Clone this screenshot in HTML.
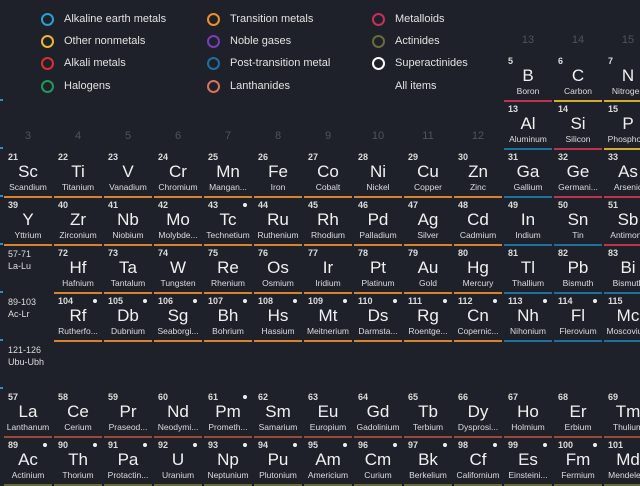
<!DOCTYPE html>
<html><head><meta charset="utf-8"><style>
html,body{margin:0;padding:0;background:#1e2129;width:640px;height:480px;overflow:hidden;font-family:"Liberation Sans",sans-serif;color:#e6e6e6}
.lg{position:absolute;font-size:11px;line-height:14px;color:#e2e2e2}
.o{position:absolute;width:9px;height:9px;border-radius:50%;border:2px solid}
.h{position:absolute;font-size:11px;color:#4e535c;width:48px;text-align:center}
.c{position:absolute;width:48px;height:46px}
.c i{position:absolute;left:4px;top:0;font-style:normal;font-size:9px;line-height:10px;font-weight:bold;color:#ddd}
.c b{position:absolute;left:0;top:10px;width:48px;text-align:center;font-weight:normal;font-size:17px;line-height:20px;color:#f0f0f0}
.c s{position:absolute;left:1px;top:30px;width:46px;text-align:center;text-decoration:none;font-size:8.5px;line-height:10px;white-space:nowrap;overflow:hidden;text-overflow:ellipsis;color:#ddd}
.c:after{content:"";position:absolute;left:0;bottom:0;width:48px;height:2px}
.d:before{content:"";position:absolute;right:5px;top:3px;width:4px;height:4px;border-radius:50%;background:#eee}
.t:after{background:#d9822b}.m:after{background:#c0324f}.n:after{background:#d9a92c}.p:after{background:#1f6f9e}.l:after{background:#9a4a38}.a:after{background:#6b6b3a}
.ph{position:absolute;left:8px;font-size:9px;line-height:12px;color:#ddd}
.tk{position:absolute;left:0;width:3px;height:2px;background:#2a8fc0}
</style></head><body>
<div class="o" style="left:41px;top:13px;border-color:#2a9fd0"></div><div class="lg" style="left:64px;top:12px">Alkaline earth metals</div>
<div class="o" style="left:41px;top:35px;border-color:#e8b830"></div><div class="lg" style="left:64px;top:34px">Other nonmetals</div>
<div class="o" style="left:41px;top:57px;border-color:#d83030"></div><div class="lg" style="left:64px;top:56px">Alkali metals</div>
<div class="o" style="left:41px;top:80px;border-color:#1f9a5a"></div><div class="lg" style="left:64px;top:79px">Halogens</div>
<div class="o" style="left:207px;top:13px;border-color:#ec902a"></div><div class="lg" style="left:230px;top:12px">Transition metals</div>
<div class="o" style="left:207px;top:35px;border-color:#7a3cb8"></div><div class="lg" style="left:230px;top:34px">Noble gases</div>
<div class="o" style="left:207px;top:57px;border-color:#1f6f9e"></div><div class="lg" style="left:230px;top:56px">Post-transition metal</div>
<div class="o" style="left:207px;top:80px;border-color:#d8735a"></div><div class="lg" style="left:230px;top:79px">Lanthanides</div>
<div class="o" style="left:372px;top:13px;border-color:#c8305a"></div><div class="lg" style="left:395px;top:12px">Metalloids</div>
<div class="o" style="left:372px;top:35px;border-color:#6b6b3a"></div><div class="lg" style="left:395px;top:34px">Actinides</div>
<div class="o" style="left:372px;top:57px;border-color:#ffffff"></div><div class="lg" style="left:395px;top:56px">Superactinides</div>
<div class="lg" style="left:395px;top:79px">All items</div>

<div class="h" style="left:4px;top:130px">3</div><div class="h" style="left:54px;top:130px">4</div><div class="h" style="left:104px;top:130px">5</div><div class="h" style="left:154px;top:130px">6</div><div class="h" style="left:204px;top:130px">7</div><div class="h" style="left:254px;top:130px">8</div><div class="h" style="left:304px;top:130px">9</div><div class="h" style="left:354px;top:130px">10</div><div class="h" style="left:404px;top:130px">11</div><div class="h" style="left:454px;top:130px">12</div>
<div class="h" style="left:504px;top:34px">13</div><div class="h" style="left:554px;top:34px">14</div><div class="h" style="left:604px;top:34px">15</div>

<div class="tk" style="top:99px"></div><div class="tk" style="top:147px"></div><div class="tk" style="top:195px"></div><div class="tk" style="top:243px"></div><div class="tk" style="top:291px"></div><div class="tk" style="top:339px"></div><div class="tk" style="top:387px"></div>

<div class="c m" style="left:504px;top:56px"><i>5</i><b>B</b><s>Boron</s></div>
<div class="c n" style="left:554px;top:56px"><i>6</i><b>C</b><s>Carbon</s></div>
<div class="c n" style="left:604px;top:56px"><i>7</i><b>N</b><s>Nitrogen</s></div>
<div class="c p" style="left:504px;top:104px"><i>13</i><b>Al</b><s>Aluminum</s></div>
<div class="c m" style="left:554px;top:104px"><i>14</i><b>Si</b><s>Silicon</s></div>
<div class="c n" style="left:604px;top:104px"><i>15</i><b>P</b><s>Phospho...</s></div>

<div class="c t" style="left:4px;top:152px"><i>21</i><b>Sc</b><s>Scandium</s></div>
<div class="c t" style="left:54px;top:152px"><i>22</i><b>Ti</b><s>Titanium</s></div>
<div class="c t" style="left:104px;top:152px"><i>23</i><b>V</b><s>Vanadium</s></div>
<div class="c t" style="left:154px;top:152px"><i>24</i><b>Cr</b><s>Chromium</s></div>
<div class="c t" style="left:204px;top:152px"><i>25</i><b>Mn</b><s>Mangan...</s></div>
<div class="c t" style="left:254px;top:152px"><i>26</i><b>Fe</b><s>Iron</s></div>
<div class="c t" style="left:304px;top:152px"><i>27</i><b>Co</b><s>Cobalt</s></div>
<div class="c t" style="left:354px;top:152px"><i>28</i><b>Ni</b><s>Nickel</s></div>
<div class="c t" style="left:404px;top:152px"><i>29</i><b>Cu</b><s>Copper</s></div>
<div class="c t" style="left:454px;top:152px"><i>30</i><b>Zn</b><s>Zinc</s></div>
<div class="c p" style="left:504px;top:152px"><i>31</i><b>Ga</b><s>Gallium</s></div>
<div class="c m" style="left:554px;top:152px"><i>32</i><b>Ge</b><s>Germani...</s></div>
<div class="c m" style="left:604px;top:152px"><i>33</i><b>As</b><s>Arsenic</s></div>

<div class="c t" style="left:4px;top:200px"><i>39</i><b>Y</b><s>Yttrium</s></div>
<div class="c t" style="left:54px;top:200px"><i>40</i><b>Zr</b><s>Zirconium</s></div>
<div class="c t" style="left:104px;top:200px"><i>41</i><b>Nb</b><s>Niobium</s></div>
<div class="c t" style="left:154px;top:200px"><i>42</i><b>Mo</b><s>Molybde...</s></div>
<div class="c t d" style="left:204px;top:200px"><i>43</i><b>Tc</b><s>Technetium</s></div>
<div class="c t" style="left:254px;top:200px"><i>44</i><b>Ru</b><s>Ruthenium</s></div>
<div class="c t" style="left:304px;top:200px"><i>45</i><b>Rh</b><s>Rhodium</s></div>
<div class="c t" style="left:354px;top:200px"><i>46</i><b>Pd</b><s>Palladium</s></div>
<div class="c t" style="left:404px;top:200px"><i>47</i><b>Ag</b><s>Silver</s></div>
<div class="c t" style="left:454px;top:200px"><i>48</i><b>Cd</b><s>Cadmium</s></div>
<div class="c p" style="left:504px;top:200px"><i>49</i><b>In</b><s>Indium</s></div>
<div class="c p" style="left:554px;top:200px"><i>50</i><b>Sn</b><s>Tin</s></div>
<div class="c m" style="left:604px;top:200px"><i>51</i><b>Sb</b><s>Antimony</s></div>

<div class="ph" style="top:248px">57-71<br>La-Lu</div>
<div class="c t" style="left:54px;top:248px"><i>72</i><b>Hf</b><s>Hafnium</s></div>
<div class="c t" style="left:104px;top:248px"><i>73</i><b>Ta</b><s>Tantalum</s></div>
<div class="c t" style="left:154px;top:248px"><i>74</i><b>W</b><s>Tungsten</s></div>
<div class="c t" style="left:204px;top:248px"><i>75</i><b>Re</b><s>Rhenium</s></div>
<div class="c t" style="left:254px;top:248px"><i>76</i><b>Os</b><s>Osmium</s></div>
<div class="c t" style="left:304px;top:248px"><i>77</i><b>Ir</b><s>Iridium</s></div>
<div class="c t" style="left:354px;top:248px"><i>78</i><b>Pt</b><s>Platinum</s></div>
<div class="c t" style="left:404px;top:248px"><i>79</i><b>Au</b><s>Gold</s></div>
<div class="c t" style="left:454px;top:248px"><i>80</i><b>Hg</b><s>Mercury</s></div>
<div class="c p" style="left:504px;top:248px"><i>81</i><b>Tl</b><s>Thallium</s></div>
<div class="c p" style="left:554px;top:248px"><i>82</i><b>Pb</b><s>Bismuth</s></div>
<div class="c p" style="left:604px;top:248px"><i>83</i><b>Bi</b><s>Bismuth</s></div>

<div class="ph" style="top:296px">89-103<br>Ac-Lr</div>
<div class="c t d" style="left:54px;top:296px"><i>104</i><b>Rf</b><s>Rutherfo...</s></div>
<div class="c t d" style="left:104px;top:296px"><i>105</i><b>Db</b><s>Dubnium</s></div>
<div class="c t d" style="left:154px;top:296px"><i>106</i><b>Sg</b><s>Seaborgi...</s></div>
<div class="c t d" style="left:204px;top:296px"><i>107</i><b>Bh</b><s>Bohrium</s></div>
<div class="c t d" style="left:254px;top:296px"><i>108</i><b>Hs</b><s>Hassium</s></div>
<div class="c t d" style="left:304px;top:296px"><i>109</i><b>Mt</b><s>Meitnerium</s></div>
<div class="c t d" style="left:354px;top:296px"><i>110</i><b>Ds</b><s>Darmsta...</s></div>
<div class="c t d" style="left:404px;top:296px"><i>111</i><b>Rg</b><s>Roentge...</s></div>
<div class="c t d" style="left:454px;top:296px"><i>112</i><b>Cn</b><s>Copernic...</s></div>
<div class="c p d" style="left:504px;top:296px"><i>113</i><b>Nh</b><s>Nihonium</s></div>
<div class="c p d" style="left:554px;top:296px"><i>114</i><b>Fl</b><s>Flerovium</s></div>
<div class="c p d" style="left:604px;top:296px"><i>115</i><b>Mc</b><s>Moscovium</s></div>

<div class="ph" style="top:344px">121-126<br>Ubu-Ubh</div>

<div class="c l" style="left:4px;top:392px"><i>57</i><b>La</b><s>Lanthanum</s></div>
<div class="c l" style="left:54px;top:392px"><i>58</i><b>Ce</b><s>Cerium</s></div>
<div class="c l" style="left:104px;top:392px"><i>59</i><b>Pr</b><s>Praseod...</s></div>
<div class="c l" style="left:154px;top:392px"><i>60</i><b>Nd</b><s>Neodymi...</s></div>
<div class="c l d" style="left:204px;top:392px"><i>61</i><b>Pm</b><s>Prometh...</s></div>
<div class="c l" style="left:254px;top:392px"><i>62</i><b>Sm</b><s>Samarium</s></div>
<div class="c l" style="left:304px;top:392px"><i>63</i><b>Eu</b><s>Europium</s></div>
<div class="c l" style="left:354px;top:392px"><i>64</i><b>Gd</b><s>Gadolinium</s></div>
<div class="c l" style="left:404px;top:392px"><i>65</i><b>Tb</b><s>Terbium</s></div>
<div class="c l" style="left:454px;top:392px"><i>66</i><b>Dy</b><s>Dysprosi...</s></div>
<div class="c l" style="left:504px;top:392px"><i>67</i><b>Ho</b><s>Holmium</s></div>
<div class="c l" style="left:554px;top:392px"><i>68</i><b>Er</b><s>Erbium</s></div>
<div class="c l" style="left:604px;top:392px"><i>69</i><b>Tm</b><s>Thulium</s></div>

<div class="c a d" style="left:4px;top:440px"><i>89</i><b>Ac</b><s>Actinium</s></div>
<div class="c a d" style="left:54px;top:440px"><i>90</i><b>Th</b><s>Thorium</s></div>
<div class="c a d" style="left:104px;top:440px"><i>91</i><b>Pa</b><s>Protactin...</s></div>
<div class="c a d" style="left:154px;top:440px"><i>92</i><b>U</b><s>Uranium</s></div>
<div class="c a d" style="left:204px;top:440px"><i>93</i><b>Np</b><s>Neptunium</s></div>
<div class="c a d" style="left:254px;top:440px"><i>94</i><b>Pu</b><s>Plutonium</s></div>
<div class="c a d" style="left:304px;top:440px"><i>95</i><b>Am</b><s>Americium</s></div>
<div class="c a d" style="left:354px;top:440px"><i>96</i><b>Cm</b><s>Curium</s></div>
<div class="c a d" style="left:404px;top:440px"><i>97</i><b>Bk</b><s>Berkelium</s></div>
<div class="c a d" style="left:454px;top:440px"><i>98</i><b>Cf</b><s>Californium</s></div>
<div class="c a d" style="left:504px;top:440px"><i>99</i><b>Es</b><s>Einsteini...</s></div>
<div class="c a d" style="left:554px;top:440px"><i>100</i><b>Fm</b><s>Fermium</s></div>
<div class="c a d" style="left:604px;top:440px"><i>101</i><b>Md</b><s>Mendele...</s></div>
</body></html>
